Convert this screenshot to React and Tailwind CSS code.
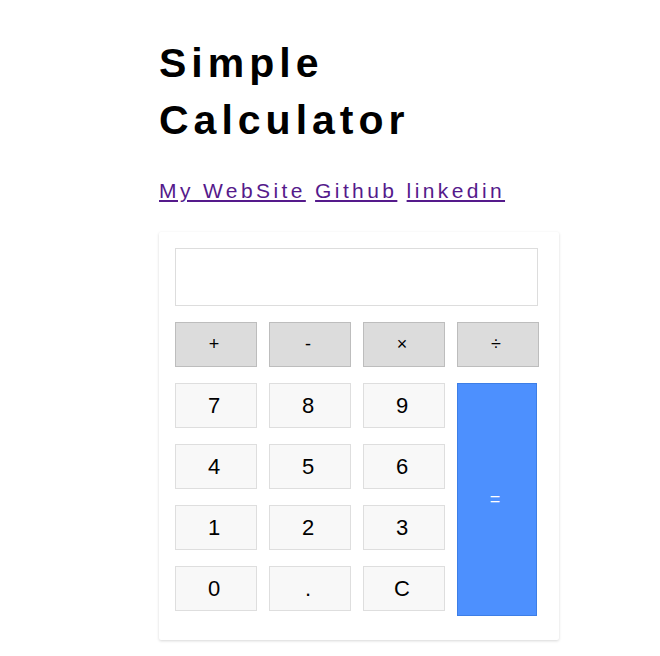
import React from 'react'

const OPS = ['+', '-', '×', '÷']
const KEYS = ['7', '8', '9', '4', '5', '6', '1', '2', '3', '0', '.', 'C']

// ── Key button ─────────────────────────────────────────────────────────────
function Key({ children }) {
  return (
    <button className="h-[45px] w-[82px] border border-[#dedede] bg-[#f8f8f8] text-[22px] tracking-[4px] text-black">
      {children}
    </button>
  )
}

function OpKey({ children }) {
  return (
    <button className="h-[45px] w-[82px] border border-[#bdbdbd] bg-[#dcdcdc] text-[18px] tracking-[4px] text-black">
      {children}
    </button>
  )
}

export default function App() {
  return (
    <div className="min-h-screen bg-white font-['Liberation_Sans',Arial,sans-serif]">
      <div className="ml-[159px] w-[400px] pt-[35px]">
        <h1 className="text-[41px] font-bold leading-[57px] tracking-[5px] text-black">
          Simple Calculator
        </h1>

        <div className="mt-[30px] text-[21px] leading-[23px] tracking-[3.4px]">
          <a href="#" className="text-[#551a8b] underline">My WebSite</a>{' '}
          <a href="#" className="text-[#551a8b] underline">Github</a>{' '}
          <a href="#" className="text-[#551a8b] underline">linkedin</a>
        </div>

        {/* Calculator */}
        <div className="mt-[30px] rounded-[2px] bg-white pt-4 pl-4 pr-5 pb-[29px] shadow-[0_1px_3px_rgba(0,0,0,0.16)]">
          <div className="h-[58px] w-[363px] border border-[#dddddd] bg-white" />

          <div className="mt-4 flex gap-3">
            {OPS.map(op => <OpKey key={op}>{op}</OpKey>)}
          </div>

          <div className="mt-4 grid grid-cols-[82px_82px_82px_80px] grid-rows-[45px_45px_45px_45px] gap-x-3 gap-y-4">
            {KEYS.slice(0, 3).map(k => <Key key={k}>{k}</Key>)}
            <button className="row-span-4 h-[233px] w-[80px] self-start border border-[#3d7ee6] bg-[#4d90fe] text-[18px] tracking-[4px] text-white">
              =
            </button>
            {KEYS.slice(3).map(k => <Key key={k}>{k}</Key>)}
          </div>
        </div>
      </div>
    </div>
  )
}
